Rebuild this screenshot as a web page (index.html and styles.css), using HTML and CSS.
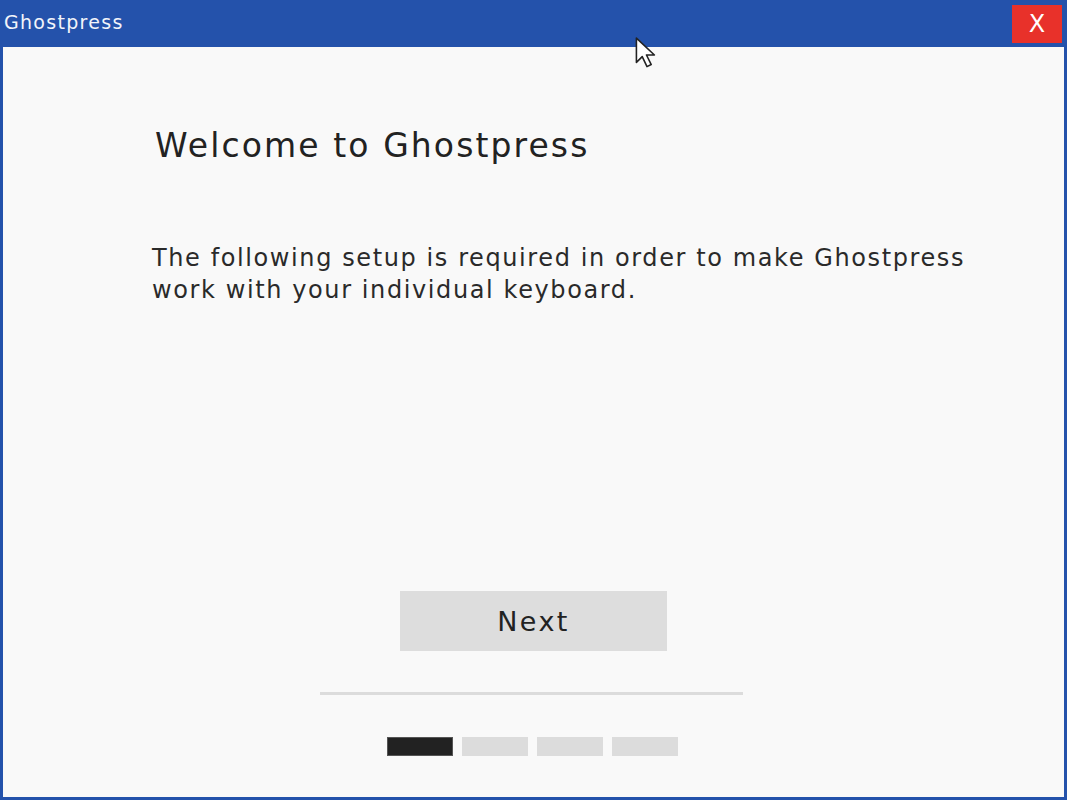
FILE: index.html
```html
<!DOCTYPE html>
<html lang="en">
<head>
    <meta charset="UTF-8">
    <title>Ghostpress</title>
<link rel="stylesheet" href="styles.css">
</head>
<body>
<div class="window">
    <div class="titlebar">
        <span class="title">Ghostpress</span>
        <button class="close-button">X</button>
    </div>
    <div class="content">
        <div class="intro">
            <h1>Welcome to Ghostpress</h1>
            <p>The following setup is required in order to make Ghostpress<br>work with your individual keyboard.</p>
        </div>
        <div class="footer">
            <button class="next-button">Next</button>
            <div class="divider"></div>
            <div class="steps">
                <span class="step active"></span>
                <span class="step"></span>
                <span class="step"></span>
                <span class="step"></span>
            </div>
        </div>
    </div>
    <svg class="cursor" width="24" height="36" viewBox="0 0 22 34">
        <path d="M1 1 L1 24 L6.5 18.5 L11 28 L15 26 L10.5 17 L18 17 Z" fill="#fff" stroke="#222" stroke-width="1.5" stroke-linejoin="round"/>
    </svg>
</div>
</body>
</html>
```

FILE: styles.css
```css
html, body {
    margin: 0;
    height: 100%;
}
body {
    background-color: #2452ab;
    font-family: "DejaVu Sans", Verdana, sans-serif;
}
.window {
    position: relative;
    height: 100%;
    display: flex;
    flex-direction: column;
}
.titlebar {
    height: 47px;
    display: flex;
    justify-content: space-between;
    align-items: flex-start;
    color: #f2f4fa;
}
.title {
    font-size: 19px;
    line-height: 20px;
    letter-spacing: 1.3px;
    margin-top: 12px;
    margin-left: 4px;
}
.close-button {
    margin: 5px 5px 0 0;
    width: 50px;
    height: 38px;
    border: none;
    background-color: #e8312a;
    color: #fff;
    font-family: "DejaVu Sans", Verdana, sans-serif;
    font-size: 24px;
    padding: 0;
}
.content {
    flex: 1;
    margin: 0 3px 3px 3px;
    background-color: #f9f9f9;
    display: flex;
    flex-direction: column;
    justify-content: space-between;
}
.intro {
    padding-left: 149px;
    color: #222;
}
.intro h1 {
    font-weight: normal;
    font-size: 33px;
    line-height: 40px;
    letter-spacing: 2.1px;
    margin: 79px 0 0 3px;
}
.intro p {
    font-size: 24px;
    line-height: 32px;
    letter-spacing: 1.6px;
    margin: 76px 0 0 0;
    color: #2a2a2a;
}
.footer {
    display: flex;
    flex-direction: column;
    align-items: center;
    padding-bottom: 41px;
}
.next-button {
    width: 267px;
    height: 60px;
    border: none;
    background-color: #dddddd;
    color: #222;
    font-family: "DejaVu Sans", Verdana, sans-serif;
    font-size: 27px;
    letter-spacing: 2.4px;
    padding: 0;
    margin-bottom: 41px;
}
.divider {
    width: 423px;
    height: 3px;
    background-color: #dcdcdc;
    margin: 0 4px 42px 0;
}
.steps {
    display: flex;
    gap: 9px;
    margin-right: 2px;
}
.step {
    width: 66px;
    height: 19px;
    background-color: #dcdcdc;
}
.step.active {
    background-color: #222;
    box-shadow: 0 0 0 1px #555 inset;
}
.cursor {
    position: absolute;
    left: 635px;
    top: 37px;
}
```
